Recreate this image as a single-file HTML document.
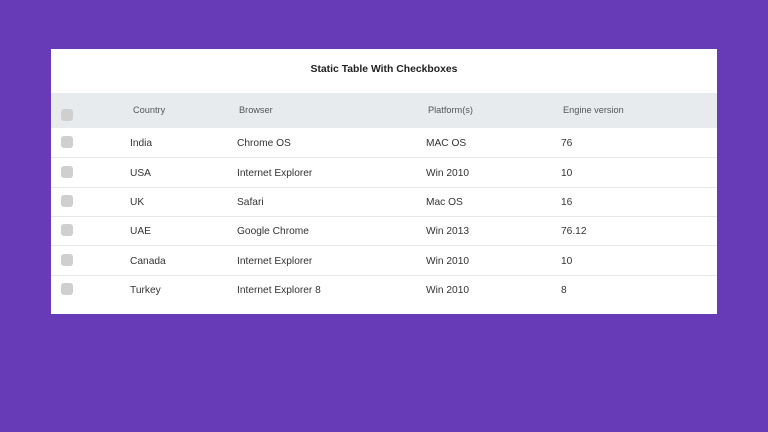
<!DOCTYPE html><html><head><style>
body{margin:0;width:768px;height:432px;background:#673ab7;font-family:"Liberation Sans",sans-serif;position:relative;overflow:hidden}
.card{position:absolute;left:51px;top:49px;width:666px;height:265px;background:#fff}
.title{position:absolute;top:1px;left:0;width:100%;text-align:center;line-height:40px;font-weight:bold;font-size:10.4px;color:#222;height:44px}
.hd{position:absolute;left:0;top:44px;width:666px;height:35px;background:#e8ebee;font-size:9.2px}
.row{position:absolute;left:0;width:666px;height:29px;border-bottom:1px solid #e8e8e8;font-size:10.2px;color:#333}
.row span,.hd span{position:absolute;top:1px;line-height:29px}
.hd span{line-height:34px;color:#555;top:0}
.cb{position:absolute;left:10px;width:12px;height:12px;background:#cfcfcf;border-radius:3px}
</style></head><body><div class="card">
<div class="title">Static Table With Checkboxes</div>
<div class="hd"><div class="cb" style="top:16px"></div><span style="left:82px">Country</span><span style="left:188px">Browser</span><span style="left:377px">Platform(s)</span><span style="left:512px">Engine version</span></div>
<div class="row" style="top:79px"><div class="cb" style="top:8px"></div><span style="left:79px">India</span><span style="left:186px">Chrome OS</span><span style="left:375px">MAC OS</span><span style="left:510px">76</span></div>
<div class="row" style="top:109px"><div class="cb" style="top:8px"></div><span style="left:79px">USA</span><span style="left:186px">Internet Explorer</span><span style="left:375px">Win 2010</span><span style="left:510px">10</span></div>
<div class="row" style="top:138px"><div class="cb" style="top:8px"></div><span style="left:79px">UK</span><span style="left:186px">Safari</span><span style="left:375px">Mac OS</span><span style="left:510px">16</span></div>
<div class="row" style="top:167px"><div class="cb" style="top:8px"></div><span style="left:79px">UAE</span><span style="left:186px">Google Chrome</span><span style="left:375px">Win 2013</span><span style="left:510px">76.12</span></div>
<div class="row" style="top:197px"><div class="cb" style="top:8px"></div><span style="left:79px">Canada</span><span style="left:186px">Internet Explorer</span><span style="left:375px">Win 2010</span><span style="left:510px">10</span></div>
<div class="row" style="top:226px;border:0"><div class="cb" style="top:8px"></div><span style="left:79px">Turkey</span><span style="left:186px">Internet Explorer 8</span><span style="left:375px">Win 2010</span><span style="left:510px">8</span></div>
</div></body></html>
